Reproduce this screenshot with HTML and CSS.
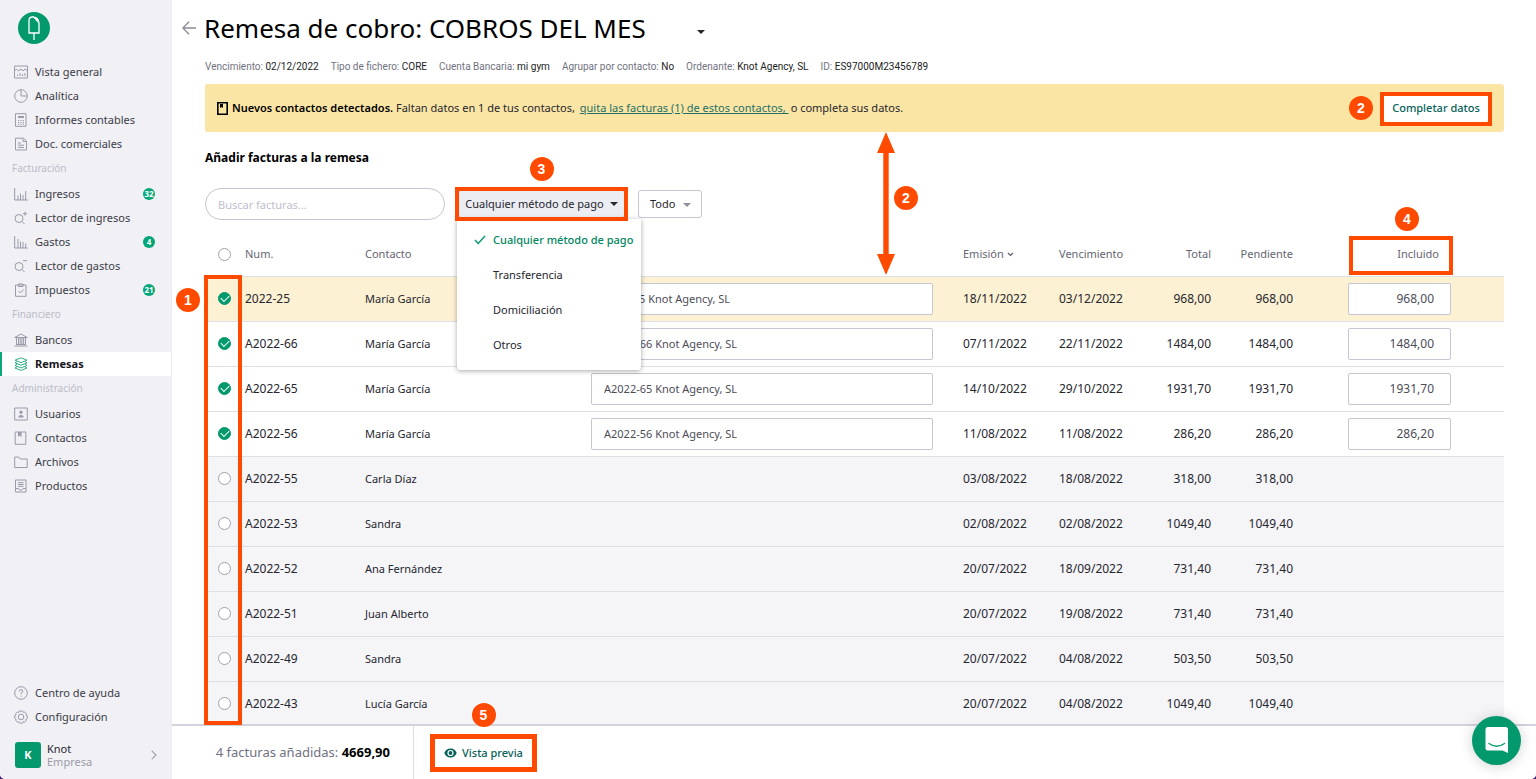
FILE: index.html
```html
<!DOCTYPE html>
<html lang="es">
<head>
<meta charset="utf-8">
<title>Remesa de cobro</title>
<link rel="stylesheet" href="styles.css">
</head>
<body>
<div class="app">

<!-- Sidebar -->
<aside class="sidebar">
	<a class="logo" href="#" aria-label="Inicio">
		<svg width="32" height="32" viewBox="0 0 32 32"><circle cx="16" cy="16" r="16" fill="#03996d"/><path d="M16 5h-1.500q-3.500 0-3.500 3.500V21h10V10.500M16 21v7" fill="none" stroke="#fff" stroke-width="1.300"/><path d="M15.500 4.500q5.500 0 6 6.500-2 .3-2.300-1.800-2 0-1.700-2-2-.2-2-2.700z" fill="#fff"/></svg>
	</a>
	<nav>
		<a class="item" href="#"><svg class="ico" viewBox="0 0 14 14"><path d="M.5 1h13v12H.5zM.5 6l2-2 2 2 2.500-2 2 2 2-2 2.500 2M3.500 11V9.500M6 11V8M8.500 11V9M11 11V8"/></svg>Vista general</a>
		<a class="item" href="#"><svg class="ico" viewBox="0 0 14 14"><circle cx="7" cy="7" r="6.300"/><path d="M7 .7V7h6.300"/></svg>Analítica</a>
		<a class="item" href="#"><svg class="ico" viewBox="0 0 14 14"><path d="M1.500.7h10.500v12.600H1.500zM4 3.500h6M4 4.500h6"/><path d="M4 7.500h6M4 9.500h6M4 11.200h6" stroke-dasharray="1.200 1.200"/></svg>Informes contables</a>
		<a class="item" href="#"><svg class="ico" viewBox="0 0 14 14"><path d="M1.500 1.200h8L12.500 4v9h-11zM9 1.500V4.500h3.500M4 6h3M4 8.200h6M4 10.400h6"/></svg>Doc. comerciales</a>
		<h2 class="group">Facturación</h2>
		<a class="item" href="#"><svg class="ico" viewBox="0 0 14 14"><path d="M.7 1v12h13M4 13V8.500M6.500 13V6.500M9 13V8M11.700 13V4"/></svg>Ingresos<span class="count">32</span></a>
		<a class="item" href="#"><svg class="ico" viewBox="0 0 14 14"><circle cx="5" cy="7.500" r="4"/><path d="M8 10.500l2.500 2.500M11 .7v4M9 2.700h4"/></svg>Lector de ingresos</a>
		<a class="item" href="#"><svg class="ico" viewBox="0 0 14 14"><path d="M.7 1v12h13M4 13V4M6.500 13V6.500M9 13V7M11.700 13V8.500"/></svg>Gastos<span class="count">4</span></a>
		<a class="item" href="#"><svg class="ico" viewBox="0 0 14 14"><circle cx="5" cy="7.500" r="4"/><path d="M8 10.500l2.500 2.500M9 1.700h4"/></svg>Lector de gastos</a>
		<a class="item" href="#"><svg class="ico" viewBox="0 0 14 14"><path d="M1.500 2h10.500v11.300H1.500zM4.500 3.500V1h1.200q1-1 2 0H9v2.500zM4.500 8l2 2 3-3.500"/></svg>Impuestos<span class="count">21</span></a>
		<h2 class="group">Financiero</h2>
		<a class="item" href="#"><svg class="ico" viewBox="0 0 14 14"><path d="M.7 4.500L7 1l6.300 3.500zM.5 13h13M2 11.500h10M2.500 5v6M4.500 5v6M6.200 5v6M7.900 5v6M9.600 5v6M11.500 5v6"/></svg>Bancos</a>
		<a class="item active" href="#"><svg class="ico" viewBox="0 0 14 14"><path d="M7 .8l6 2.400-6 2.400-6-2.400zM3 4.500L1 5.800l6 2.400 6-2.400-2-1.300M3 7.200L1 8.500l6 2.400 6-2.400-2-1.300M3 9.800L1 11l6 2.400 6-2.400-2-1.200"/></svg>Remesas</a>
		<h2 class="group">Administración</h2>
		<a class="item" href="#"><svg class="ico" viewBox="0 0 14 14"><path d="M.7 1h12.600v12H.7z"/><path d="M7 3.500a1.700 1.700 0 010 3.400 1.700 1.700 0 010-3.400zM4.500 10.500V9q1-1 2.500-1t2.500 1v1.500z" fill="#9a9aa8" stroke="none"/></svg>Usuarios</a>
		<a class="item" href="#"><svg class="ico" viewBox="0 0 14 14"><path d="M1.200 1h10.600v12.300H1.200z"/><path d="M4 1h3.500v5L5.700 4.600 4 6z" fill="#9a9aa8" stroke="none"/></svg>Contactos</a>
		<a class="item" href="#"><svg class="ico" viewBox="0 0 14 14"><path d="M.7 2h4l1.500 2h7v8.500H.7z"/></svg>Archivos</a>
		<a class="item" href="#"><svg class="ico" viewBox="0 0 14 14"><path d="M1.500 1h10.500v12H1.500zM4 3.700h5.500M4 5.500h5.500M4 7.300h5.500M1.500 9.500h3l1 1.500h2.500l1-1.500h3"/></svg>Productos</a>
	</nav>
	<div class="bottom">
		<a class="item" href="#"><svg class="ico" viewBox="0 0 14 14"><circle cx="7" cy="7" r="6.300"/><path d="M5.200 5.500q0-1.800 1.800-1.800t1.800 1.600Q8.800 6.500 7 7.200v1M7 9.500v1.200"/></svg>Centro de ayuda</a>
		<a class="item" href="#"><svg class="ico" viewBox="0 0 14 14"><path d="M5.500 1h3l.6 1.300 1.500-.3 1.600 1.600-.2 1.500 1.300.6v2.600l-1.300.8.2 1.500-1.600 1.500-1.500-.3-.6 1.300h-3l-.6-1.300-1.500.3-1.600-1.500.2-1.500-1.300-.8V5.700L2 5.100l-.2-1.500L3.400 2l1.500.3z"/><circle cx="7" cy="7" r="2.800"/></svg>Configuración</a>
		<button class="account" type="button">
			<span class="avatar">K</span>
			<span class="who">Knot<br><span class="role">Empresa</span></span>
			<svg width="6" height="10" viewBox="0 0 6 10"><path d="M.8.8L5 5 .8 9.200" fill="none" stroke="#a3a3b0" stroke-width="1.200"/></svg>
		</button>
	</div>
</aside>

<!-- Page -->
<main class="page">
	<div class="content">
		<header class="head">
			<a class="back" href="#" aria-label="Volver"><svg width="14" height="14" viewBox="0 0 14 14"><path d="M7 .8L.9 7 7 13.200M1 7h13" fill="none" stroke="#8c8c9a" stroke-width="1.400"/></svg></a>
			<h1>Remesa de cobro: COBROS DEL MES</h1>
			<button class="more" type="button" aria-label="Opciones"><span class="caret"></span></button>
		</header>

		<ul class="meta">
			<li>Vencimiento: <b>02/12/2022</b></li>
			<li>Tipo de fichero: <b>CORE</b></li>
			<li>Cuenta Bancaria: <b>mi gym</b></li>
			<li>Agrupar por contacto: <b>No</b></li>
			<li>Ordenante: <b>Knot Agency, SL</b></li>
			<li>ID: <b>ES97000M23456789</b></li>
		</ul>

		<div class="notice">
			<svg width="11" height="13" viewBox="0 0 11 13"><path d="M.8.800h9.400v11.400H.8z" fill="none" stroke="#000" stroke-width="1.600"/><path d="M3 2h3v4L4.500 5 3 6z"/></svg>
			<p><strong>Nuevos contactos detectados.</strong> Faltan datos en 1 de tus contactos, <a href="#">quita las facturas (1) de estos contactos, </a> o completa sus datos.</p>
			<div class="marked complete">
				<button class="btn" type="button">Completar datos</button>
				<span class="frame"></span>
				<span class="step step-left">2</span>
			</div>
		</div>

		<h3>Añadir facturas a la remesa</h3>

		<div class="filters">
			<input class="search" type="text" placeholder="Buscar facturas..." aria-label="Buscar facturas">
			<div class="marked method">
				<button class="drop open" type="button" aria-haspopup="listbox" aria-expanded="true">Cualquier método de pago <span class="caret"></span></button>
				<ul class="menu" role="listbox" aria-label="Método de pago">
					<li role="option" aria-selected="true" class="chosen"><svg width="12" height="10" viewBox="0 0 12 10"><path d="M1 5l3.200 3.500L11 1" fill="none" stroke="#03996d" stroke-width="1.400"/></svg>Cualquier método de pago</li>
					<li role="option">Transferencia</li>
					<li role="option">Domiciliación</li>
					<li role="option">Otros</li>
				</ul>
				<span class="frame"></span>
				<span class="step step-top">3</span>
			</div>
			<div class="pick">
				<select class="drop" aria-label="Mostrar"><option>Todo</option></select>
				<span class="caret"></span>
			</div>
		</div>

		<div class="invoices">
		<table>
			<colgroup><col class="c-check"><col class="c-num"><col class="c-contact"><col><col class="c-date"><col class="c-date"><col class="c-total"><col class="c-pending"><col class="c-included"></colgroup>
			<thead>
				<tr><th><input type="checkbox" aria-label="Todas"></th><th>Num.</th><th>Contacto</th><th>Concepto</th><th>Emisión <svg width="7" height="5" viewBox="0 0 7 5"><path d="M1 1l2.500 2.500L6 1" fill="none" stroke="#5f5f6d" stroke-width="1.200"/></svg></th><th>Vencimiento</th><th class="num">Total</th><th class="num">Pendiente</th><th class="num inc"><div class="marked">Incluido<span class="frame"></span><span class="step step-top">4</span></div></th></tr>
			</thead>
			<tbody>
				<tr class="warn"><td><input type="checkbox" checked aria-label="2022-25"></td><td>2022-25</td><td class="name">María García</td><td><input class="field" type="text" value="2022-25 Knot Agency, SL" aria-label="Concepto 2022-25"></td><td>18/11/2022</td><td>03/12/2022</td><td class="num">968,00</td><td class="num">968,00</td><td class="num"><input class="field amount" type="text" value="968,00" aria-label="Incluido 2022-25"></td></tr>
				<tr><td><input type="checkbox" checked aria-label="A2022-66"></td><td>A2022-66</td><td class="name">María García</td><td><input class="field" type="text" value="A2022-66 Knot Agency, SL" aria-label="Concepto A2022-66"></td><td>07/11/2022</td><td>22/11/2022</td><td class="num">1484,00</td><td class="num">1484,00</td><td class="num"><input class="field amount" type="text" value="1484,00" aria-label="Incluido A2022-66"></td></tr>
				<tr><td><input type="checkbox" checked aria-label="A2022-65"></td><td>A2022-65</td><td class="name">María García</td><td><input class="field" type="text" value="A2022-65 Knot Agency, SL" aria-label="Concepto A2022-65"></td><td>14/10/2022</td><td>29/10/2022</td><td class="num">1931,70</td><td class="num">1931,70</td><td class="num"><input class="field amount" type="text" value="1931,70" aria-label="Incluido A2022-65"></td></tr>
				<tr><td><input type="checkbox" checked aria-label="A2022-56"></td><td>A2022-56</td><td class="name">María García</td><td><input class="field" type="text" value="A2022-56 Knot Agency, SL" aria-label="Concepto A2022-56"></td><td>11/08/2022</td><td>11/08/2022</td><td class="num">286,20</td><td class="num">286,20</td><td class="num"><input class="field amount" type="text" value="286,20" aria-label="Incluido A2022-56"></td></tr>
				<tr class="off"><td><input type="checkbox" aria-label="A2022-55"></td><td>A2022-55</td><td class="name">Carla Díaz</td><td></td><td>03/08/2022</td><td>18/08/2022</td><td class="num">318,00</td><td class="num">318,00</td><td></td></tr>
				<tr class="off"><td><input type="checkbox" aria-label="A2022-53"></td><td>A2022-53</td><td class="name">Sandra</td><td></td><td>02/08/2022</td><td>02/08/2022</td><td class="num">1049,40</td><td class="num">1049,40</td><td></td></tr>
				<tr class="off"><td><input type="checkbox" aria-label="A2022-52"></td><td>A2022-52</td><td class="name">Ana Fernández</td><td></td><td>20/07/2022</td><td>18/09/2022</td><td class="num">731,40</td><td class="num">731,40</td><td></td></tr>
				<tr class="off"><td><input type="checkbox" aria-label="A2022-51"></td><td>A2022-51</td><td class="name">Juan Alberto</td><td></td><td>20/07/2022</td><td>19/08/2022</td><td class="num">731,40</td><td class="num">731,40</td><td></td></tr>
				<tr class="off"><td><input type="checkbox" aria-label="A2022-49"></td><td>A2022-49</td><td class="name">Sandra</td><td></td><td>20/07/2022</td><td>04/08/2022</td><td class="num">503,50</td><td class="num">503,50</td><td></td></tr>
				<tr class="off"><td><input type="checkbox" aria-label="A2022-43"></td><td>A2022-43</td><td class="name">Lucía García</td><td></td><td>20/07/2022</td><td>04/08/2022</td><td class="num">1049,40</td><td class="num">1049,40</td><td></td></tr>
			</tbody>
		</table>
		<span class="frame checks"></span>
		<span class="step step-checks">1</span>
		<svg class="arrow" width="18" height="143" viewBox="0 0 18 143"><path d="M9 0l9 21h-6.300v101H18L9 143l-9-21h6.300V21H0z" fill="#ff4a00"/></svg>
		<span class="step step-arrow">2</span>
		</div>
	</div>

	<footer class="summary">
		<div class="added">4 facturas añadidas: <b>4669,90</b></div>
		<div class="marked preview">
			<button class="btn" type="button"><svg width="13" height="10" viewBox="0 0 13 10"><path d="M6.500.500C3.500.500 1.200 2.300.3 5c.9 2.700 3.200 4.500 6.200 4.500S11.800 7.700 12.700 5C11.800 2.300 9.500.500 6.500.500z" fill="#056159"/><circle cx="6.500" cy="5" r="3.100" fill="#fff"/><circle cx="6.500" cy="5" r="1.900" fill="#056159"/></svg>Vista previa</button>
			<span class="frame"></span>
			<span class="step step-top">5</span>
		</div>
	</footer>
</main>

<button class="chat" type="button" aria-label="Chat"><svg width="24" height="27" viewBox="0 0 24 27"><path d="M3 0h17.500q2.500 0 2.500 2.500V26l-5.500-2.500H3Q.5 23.500.5 21V2.500Q.5 0 3 0z" fill="#fff"/><path d="M4 16.500q7.700 5.500 15.500 0" fill="none" stroke="#03996d" stroke-width="1.400" stroke-linecap="round"/></svg></button>

</div>
</body>
</html>
```
FILE: styles.css
```css
*		{ box-sizing:border-box; }

html		{ background:#3b1a7a; }

body		{ margin:0;
		  font:11px/16px "Noto Sans", "Open Sans", sans-serif;
		  color:#26262e;
}

h1, h2, h3, p, ul	{ margin:0; padding:0; font-weight:normal; }
ul		{ list-style:none; }
a		{ color:inherit; text-decoration:none; }
svg		{ flex:none; }

button, input, select	{ font:inherit; color:inherit; margin:0; }

.app		{ position:relative;
		  display:flex;
		  height:100vh;
		  background:#fff;
		  border-radius:0 0 5px 5px;
		  overflow:hidden;
}

/* sidebar */
.sidebar	{ display:flex;
		  flex-direction:column;
		  flex:none;
		  width:172px;
		  background:#f0f0f5;
		  border-right:1px solid #ebebf1;
}

.logo		{ display:block;
		  height:60px;
		  padding:12px 18px 0;
}

.item		{ display:flex;
		  align-items:center;
		  height:24px;
		  padding:0 16px 0 14px;
		  gap:7px;
		  color:#3c3c46;
}

.ico		{ width:14px;
		  height:14px;
		  fill:none;
		  stroke:#9a9aa8;
}

.active		{ background:#fff;
		  color:#16161c;
		  font-weight:bold;
		  box-shadow:inset 2px 0 #0aa778;
}

.active .ico	{ stroke:#2fae86; }

.group		{ padding:0 12px 1px;
		  font-size:10px;
		  line-height:25px;
		  color:#bcbcc8;
}

.count		{ width:12px;
		  height:12px;
		  margin-left:auto;
		  border-radius:6px;
		  background:#03a678;
		  color:#fff;
		  font-size:8px;
		  font-weight:bold;
		  line-height:12px;
		  text-align:center;
}

.bottom		{ margin-top:auto; }

.account	{ display:flex;
		  align-items:center;
		  width:100%;
		  height:50px;
		  padding:2px 14px 0 15px;
		  gap:6px;
		  border:0;
		  background:none;
		  line-height:13px;
		  text-align:left;
}

.avatar		{ width:26px;
		  height:26px;
		  border-radius:3px;
		  background:#03996d;
		  color:#fff;
		  font-weight:bold;
		  line-height:26px;
		  text-align:center;
}

.who		{ flex:1; }
.role		{ color:#9c9ca8; }

/* page */
.page		{ display:flex;
		  flex-direction:column;
		  flex:1;
		  min-width:0;
}

.content	{ flex:1;
		  min-height:0;
		  padding:0 32px 0 33px;
}

.head		{ display:flex;
		  align-items:center;
		  height:56px;
		  margin-left:-23px;
		  gap:8px;
}

.back		{ display:flex; }

h1		{ font-size:26px;
		  line-height:56px;
		  color:#000;
}

.more		{ display:flex;
		  margin-left:35px;
		  padding:12px 8px 4px;
		  border:0;
		  background:none;
}

.caret		{ display:inline-block;
		  border:4px solid transparent;
		  border-top-color:currentColor;
		  border-bottom:0;
}

.meta		{ display:flex;
		  gap:12px;
		  height:28px;
		  padding-top:3px;
		  font-family:Roboto, "Noto Sans", sans-serif;
		  font-size:10px;
		  color:#72727f;
}

.meta b		{ font-weight:normal; color:#1c1c22; }

.notice		{ display:flex;
		  align-items:center;
		  height:48px;
		  padding:0 16px 0 12px;
		  gap:4px;
		  border-radius:3px;
		  background:#fbe5a5;
}

.notice p	{ flex:1; }
.notice strong	{ font-weight:600; color:#000; }
.notice a	{ margin:0 2px; color:#257064; text-decoration:underline; }

h3		{ font-size:12px;
		  font-weight:bold;
		  line-height:16px;
		  padding-top:18px;
		  color:#000;
}

.btn		{ display:flex;
		  align-items:center;
		  justify-content:center;
		  gap:5px;
		  height:28px;
		  padding:0;
		  border:0;
		  border-radius:3px;
		  background:#fff;
		  color:#056159;
		  font-weight:500;
}

.filters	{ display:flex;
		  align-items:center;
		  gap:13px;
		  height:32px;
		  margin-top:22px;
}

.search		{ width:240px;
		  height:32px;
		  padding:0 12px;
		  border:1px solid #c6c6d2;
		  border-radius:16px;
		  background:#fff;
}

.search::placeholder	{ color:#c0c0ce; }

.drop		{ display:flex;
		  align-items:center;
		  gap:6px;
		  height:28px;
		  padding:0 10px;
		  border:1px solid #c6c6d2;
		  border-radius:3px;
		  background:#fff;
		  white-space:nowrap;
}

.open		{ width:167px;
		  padding:0;
		  justify-content:center;
		  background:#ececf3;
}

.pick		{ position:relative; }

.pick .drop	{ width:64px; padding:0 11px; appearance:none; }

.pick .caret	{ position:absolute;
		  right:11px;
		  top:13px;
		  color:#8f8f9c;
		  pointer-events:none;
}

.menu		{ position:absolute;
		  z-index:2;
		  top:29px;
		  left:-1px;
		  width:184px;
		  padding:3px 0 8px;
		  border-radius:0 0 3px 3px;
		  background:#fff;
		  box-shadow:0 1px 5px rgba(0,0,0,.35);
}

.menu li	{ display:flex;
		  align-items:center;
		  height:35px;
		  padding-left:36px;
		  white-space:nowrap;
}

.menu .chosen	{ padding-left:17px;
		  gap:7px;
		  color:#03865f;
		  font-weight:500;
}

/* invoices */
.invoices	{ position:relative; margin-top:13px; }

table		{ width:100%;
		  table-layout:fixed;
		  border-collapse:collapse;
}

.c-check	{ width:40px; }
.c-num		{ width:120px; }
.c-contact	{ width:226px; }
.c-date		{ width:96px; }
.c-total	{ width:56px; }
.c-pending	{ width:82px; }
.c-included	{ width:211px; }

th, td		{ height:45px;
		  padding:0;
		  border-bottom:1px solid #dedee6;
		  font-size:12px;
		  font-weight:normal;
		  text-align:left;
		  white-space:nowrap;
}

th		{ height:43px; font-size:11px; color:#656572; }
th svg		{ margin-bottom:1px; }

.name		{ font-size:11px; }

td:first-child, th:first-child	{ padding-left:13px; }
td:nth-child(4)	{ padding-right:30px; }
.num		{ text-align:right; }
.num:last-child	{ padding-right:53px; }

.warn		{ background:#fcf1d2; }
.off		{ background:#f5f5f8; }

input[type=checkbox]	{ display:block;
		  position:relative;
		  width:13px;
		  height:13px;
		  appearance:none;
		  border:1px solid #a0a0ac;
		  border-radius:50%;
		  background:#fff;
}

input[type=checkbox]:checked	{ border-color:#03996d; background:#03996d; }

input[type=checkbox]:checked::after	{ content:"";
		  position:absolute;
		  left:2px;
		  top:2px;
		  width:7px;
		  height:4px;
		  border:solid #fff;
		  border-width:0 0 1px 1px;
		  transform:rotate(-45deg);
}

.field		{ width:100%;
		  height:32px;
		  padding:0 12px;
		  border:1px solid #c6c6d2;
		  border-radius:2px;
		  background:#fff;
		  color:#4d4d58;
		  font-size:11px;
		  vertical-align:middle;
}

.amount		{ width:103px;
		  padding:0 16px;
		  text-align:right;
		  font-size:12px;
}

/* footer */
.summary	{ position:relative;
		  display:flex;
		  flex:none;
		  height:55px;
		  border-top:2px solid #d3d3de;
		  background:#fff;
}

.added		{ width:242px;
		  padding-right:23px;
		  border-right:1px solid #dcdce4;
		  font-size:13px;
		  line-height:53px;
		  text-align:right;
		  color:#72727f;
		  white-space:nowrap;
}

.added b	{ color:#000; }

.chat		{ position:absolute;
		  right:15px;
		  bottom:14px;
		  display:flex;
		  align-items:center;
		  justify-content:center;
		  width:49px;
		  height:49px;
		  padding:0;
		  border:0;
		  border-radius:50%;
		  background:#03996d;
		  box-shadow:0 1px 14px rgba(0,0,0,.18);
}

/* numbered steps drawn over the page */
.marked		{ position:relative; }

.frame		{ position:absolute;
		  z-index:3;
		  inset:-3px;
		  border:4px solid #ff4a00;
		  pointer-events:none;
}

.step		{ position:absolute;
		  z-index:4;
		  width:24px;
		  height:24px;
		  border-radius:50%;
		  background:#ff4a00;
		  color:#fff;
		  font:bold 14px/24px "Liberation Sans", sans-serif;
		  text-align:center;
}

.step-top	{ left:50%; top:-33px; margin-left:-12px; }
.step-left	{ left:-35px; top:2px; }

.complete .btn	{ width:104px; }
.complete .frame	{ inset:-2px -4px -4px; }

.inc .marked	{ width:100px;
		  margin-left:auto;
		  padding-right:12px;
}

.inc .frame	{ inset:-10px -2px -13px; }
.inc .step-top	{ left:56px; top:-39px; }

.preview	{ align-self:center; margin-left:21px; }
.preview .btn	{ width:97px; }
.preview .frame	{ inset:-5px; border-width:5px; }
.preview .step-top	{ top:-36px; }

.checks		{ inset:42px auto auto -1px;
		  width:38px;
		  height:450px;
}

.step-checks	{ left:-29px; top:55px; }
.arrow		{ position:absolute; left:672px; top:-101px; }
.step-arrow	{ left:689px; top:-47px; }
```
